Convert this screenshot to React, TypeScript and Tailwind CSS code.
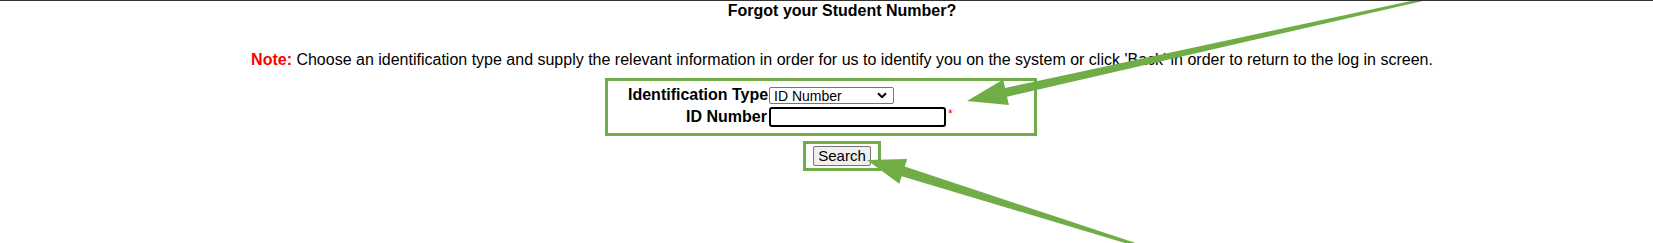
import React from "react";

type Pt = [number, number];

// tapered arrow: thin tail, wide head
function arrowPoints(tip: Pt, tail: Pt, headLen: number, headHalf: number, shaftHalf: number, tailHalf: number) {
    const dx = tail[0] - tip[0];
    const dy = tail[1] - tip[1];
    const len = Math.hypot(dx, dy);
    const ux = dx / len;
    const uy = dy / len;
    const px = -uy;
    const py = ux;
    const bx = tip[0] + ux * headLen;
    const by = tip[1] + uy * headLen;
    const pts: Pt[] = [
        tip,
        [bx + px * headHalf, by + py * headHalf],
        [bx + px * shaftHalf, by + py * shaftHalf],
        [tail[0] + px * tailHalf, tail[1] + py * tailHalf],
        [tail[0] - px * tailHalf, tail[1] - py * tailHalf],
        [bx - px * shaftHalf, by - py * shaftHalf],
        [bx - px * headHalf, by - py * headHalf],
    ];
    return pts.map((p) => `${p[0].toFixed(1)},${p[1].toFixed(1)}`).join(" ");
}

const App: React.FC = () => {
    return (
        <div
            className="relative w-[1653px] h-[243px] overflow-hidden bg-white border-t border-[#333333] text-black"
            style={{ fontFamily: "'Liberation Sans', Arial, sans-serif" }}
        >
            <div className="w-[1684px] flex flex-col items-center">
                <h1 className="text-[16px] leading-[18px] font-bold mt-[1px]">Forgot your Student Number?</h1>

                <p className="text-[16px] leading-[18px] mt-[31px] whitespace-nowrap">
                    <span className="text-[#ff0000] font-bold">Note:</span> Choose an identification type and supply the
                    relevant information in order for us to identify you on the system or click 'Back' in order to return to
                    the log in screen.
                </p>
            </div>

            {/* form table */}
            <div className="ml-[628px] mt-[17px] grid grid-cols-[139px_auto] gap-x-[2px] gap-y-[3px] items-center text-[16px] leading-[18px]">
                <span className="font-bold text-right whitespace-nowrap">Identification Type</span>
                <div className="relative w-[125px] h-[17px] border border-[#767676] rounded-[2px] bg-white">
                    <span className="absolute left-[4px] top-[-1px] text-[14px] leading-[18px]">ID Number</span>
                    <svg className="absolute right-[6px] top-[4px]" width="10" height="7" viewBox="0 0 10 7">
                        <path d="M1 1.2 L5 5.2 L9 1.2" fill="none" stroke="#000" strokeWidth="2" />
                    </svg>
                </div>
                <span className="font-bold text-right whitespace-nowrap">ID Number</span>
                <div className="flex items-start">
                    <div className="w-[177px] h-[20px] border-2 border-black rounded-[3px] bg-white" />
                    <span className="text-[#ff0000] text-[12px] leading-[12px] ml-[2px] mt-[1px]">*</span>
                </div>
            </div>

            <div className="ml-[813px] mt-[17px]">
                <button className="w-[58px] h-[20px] bg-[#efefef] border border-[#767676] rounded-[2px] text-[15px] leading-[18px]">
                    Search
                </button>
            </div>

            {/* annotation boxes */}
            <div className="absolute left-[605px] top-[77px] w-[432px] h-[58px] border-[3px] border-[#70ad47]" />
            <div className="absolute left-[803px] top-[140px] w-[78px] h-[30px] border-[3px] border-[#70ad47]" />

            {/* annotation arrows */}
            <svg className="absolute left-0 top-0 pointer-events-none" width="1653" height="243" viewBox="0 0 1653 243">
                <polygon points={arrowPoints([967, 100], [1426, -2], 40, 13, 4.5, 1.2)} fill="#70ad47" />
                <polygon points={arrowPoints([867, 159], [1140, 245], 38, 13, 5, 1.5)} fill="#70ad47" />
            </svg>
        </div>
    );
};

export default App;
